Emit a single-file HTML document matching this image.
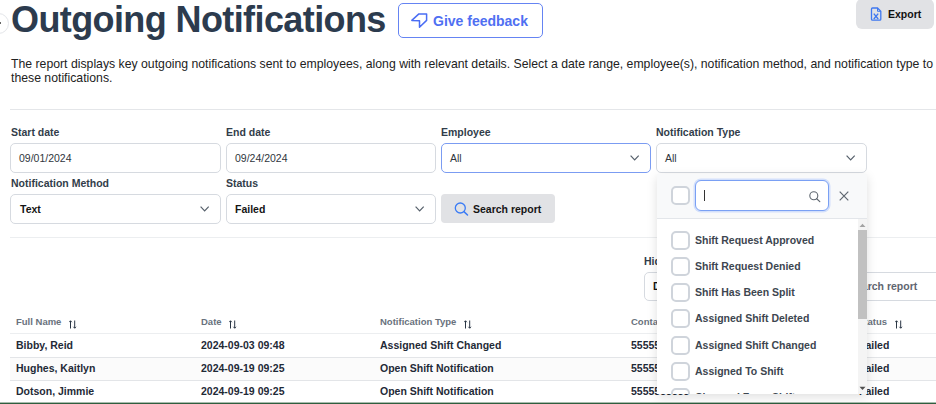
<!DOCTYPE html>
<html><head><meta charset="utf-8">
<style>
*{box-sizing:border-box;margin:0;padding:0}
html,body{width:936px;height:404px;overflow:hidden;background:#fff}
body{position:relative;font-family:"Liberation Sans",sans-serif;color:#222}
.a{position:absolute;white-space:nowrap}
.circ{left:-12.5px;top:12.5px;width:21px;height:21px;border:1px solid #e3e5e9;border-radius:50%}
.dot{left:0;top:22px;width:1px;height:2px;background:#666}
.title{left:11px;top:-2px;font-size:36px;letter-spacing:-0.6px;font-weight:bold;color:#2c3b4e;line-height:44px}
.fb{left:398px;top:3px;width:145px;height:35px;border:1px solid #6584f3;border-radius:5px}
.fbt{left:433px;top:11px;font-size:14px;font-weight:bold;color:#4f6ff2;line-height:20px}
.exp{left:856px;top:-1px;width:78px;height:30px;background:#e1e2e5;border-radius:6px}
.expt{left:888px;top:8px;font-size:10.5px;font-weight:bold;color:#111;line-height:12px}
.desc{left:11px;top:57px;font-size:12.25px;line-height:14px;color:#222}
.hr{height:1px;background:#e4e6e9}
.lbl{font-size:10.5px;font-weight:bold;color:#323d4a;line-height:12px}
.inp{height:30px;border:1px solid #d6dae0;border-radius:5px;background:#fff}
.itx{font-size:10.5px;color:#30363d;line-height:12px}
.ibx{font-size:10.5px;font-weight:bold;color:#151515;line-height:12px}
.btn{background:#e1e2e5;border-radius:4px}
.th{font-size:9.5px;font-weight:bold;color:#69727d;line-height:12px}
.td{font-size:10.5px;font-weight:bold;color:#1f2a37;line-height:12px}
.dd{left:657px;top:174px;width:210px;height:220px;background:#fff;box-shadow:0 3px 10px rgba(0,0,0,.13)}
.ddh{left:0;top:0;width:210px;height:44.5px;background:#f8f9fa;border-bottom:1px solid #e3e6ea}
.cb{width:19px;height:19px;border:2px solid #cfd4db;border-radius:5px;background:#fff}
.li{font-size:10.5px;font-weight:bold;color:#3d4650;line-height:12px}
</style></head><body>
<div class="a circ"></div><div class="a dot"></div>
<div class="a title">Outgoing Notifications</div>
<div class="a fb"></div>
<svg class="a" style="left:409px;top:11px" width="20" height="20" viewBox="409 11 20 20"><path d="M411.8,20.4 L418.9,13.9 L426.6,13.9 L426.6,20.4 L419.5,27.2 L419.5,20.7 Z" fill="none" stroke="#4a6df4" stroke-width="1.5" stroke-linejoin="round"/></svg>
<div class="a fbt">Give feedback</div>
<div class="a exp"></div>
<svg class="a" style="left:870px;top:7px" width="13" height="15" viewBox="870 7 13 15"><path d="M871.5,9 Q871.5,8 872.5,8 L877.5,8 L880.8,11.3 L880.8,19.2 Q880.8,20.2 879.8,20.2 L872.5,20.2 Q871.5,20.2 871.5,19.2 Z" fill="none" stroke="#3f78f0" stroke-width="1.3"/><path d="M877.5,8 L877.5,11.3 L880.8,11.3" fill="none" stroke="#3f78f0" stroke-width="1"/><path d="M873.8,13.6 L878.2,19 M878.2,13.6 L873.8,19" stroke="#3f78f0" stroke-width="1.4"/></svg>
<div class="a expt">Export</div>
<div class="a desc">The report displays key outgoing notifications sent to employees, along with relevant details. Select a date range, employee(s), notification method, and notification type to<br>these notifications.</div>
<div class="a hr" style="left:10px;top:109px;width:926px"></div>

<div class="a lbl" style="left:11px;top:126px">Start date</div>
<div class="a inp" style="left:10px;top:143px;width:211px"></div>
<div class="a itx" style="left:19px;top:152px">09/01/2024</div>
<div class="a lbl" style="left:226px;top:126px">End date</div>
<div class="a inp" style="left:226px;top:143px;width:210px"></div>
<div class="a itx" style="left:235px;top:152px">09/24/2024</div>
<div class="a lbl" style="left:441px;top:126px">Employee</div>
<div class="a inp" style="left:441px;top:143px;width:210px;border-color:#7b9cf2"></div>
<div class="a itx" style="left:450px;top:152px">All</div>
<svg class="a" style="left:630px;top:155.3px" width="10" height="6" viewBox="0 0 10 6"><path d="M0.6,0.6 L4.65,4.9 L8.7,0.6" fill="none" stroke="#56606b" stroke-width="1.2"/></svg>
<div class="a lbl" style="left:656px;top:126px">Notification Type</div>
<div class="a inp" style="left:656px;top:143px;width:211px"></div>
<div class="a itx" style="left:665px;top:152px">All</div>
<svg class="a" style="left:845.8px;top:155.3px" width="10" height="6" viewBox="0 0 10 6"><path d="M0.6,0.6 L4.65,4.9 L8.7,0.6" fill="none" stroke="#56606b" stroke-width="1.2"/></svg>

<div class="a lbl" style="left:11px;top:177px">Notification Method</div>
<div class="a inp" style="left:10px;top:194px;width:211px"></div>
<div class="a ibx" style="left:20px;top:203px">Text</div>
<svg class="a" style="left:199.8px;top:206px" width="10" height="6" viewBox="0 0 10 6"><path d="M0.6,0.6 L4.65,4.9 L8.7,0.6" fill="none" stroke="#56606b" stroke-width="1.2"/></svg>
<div class="a lbl" style="left:226px;top:177px">Status</div>
<div class="a inp" style="left:226px;top:194px;width:210px"></div>
<div class="a ibx" style="left:235px;top:203px">Failed</div>
<svg class="a" style="left:414.8px;top:206px" width="10" height="6" viewBox="0 0 10 6"><path d="M0.6,0.6 L4.65,4.9 L8.7,0.6" fill="none" stroke="#56606b" stroke-width="1.2"/></svg>
<div class="a btn" style="left:441px;top:194px;width:114px;height:29px"></div>
<svg class="a" style="left:453px;top:201px" width="16" height="16" viewBox="453 201 16 16"><circle cx="460.3" cy="208" r="5" fill="none" stroke="#3b7cf5" stroke-width="1.3"/><path d="M464.2,211.9 L467.5,215" stroke="#3b7cf5" stroke-width="1.5" stroke-linecap="round"/></svg>
<div class="a ibx" style="left:473px;top:202.5px">Search report</div>
<div class="a hr" style="left:10px;top:237px;width:926px;background:#eceef0"></div>

<div class="a lbl" style="left:644px;top:255px">Hide columns</div>
<div class="a inp" style="left:644px;top:272px;width:200px;height:28.5px"></div>
<div class="a ibx" style="left:653px;top:280px">Date</div>
<div class="a inp" style="left:770px;top:272px;width:190px;height:28.5px"></div>
<div class="a" style="left:849px;top:280px;font-size:10.5px;font-weight:bold;color:#5f6670;line-height:12px">Search report</div>

<div class="a th" style="left:16px;top:316px">Full Name</div><svg class="a" style="left:69px;top:319.5px" width="8" height="9" viewBox="0 0 8 9"><path d="M1.5,0.8 V8.5 M0.2,2.2 L1.5,0.8 L2.8,2.2" fill="none" stroke="#2a3644" stroke-width="1"/><path d="M5.7,0.5 V8.2 M4.4,6.8 L5.7,8.2 L7,6.8" fill="none" stroke="#2a3644" stroke-width="1"/></svg>
<div class="a th" style="left:201px;top:316px">Date</div><svg class="a" style="left:229px;top:319.5px" width="8" height="9" viewBox="0 0 8 9"><path d="M1.5,0.8 V8.5 M0.2,2.2 L1.5,0.8 L2.8,2.2" fill="none" stroke="#2a3644" stroke-width="1"/><path d="M5.7,0.5 V8.2 M4.4,6.8 L5.7,8.2 L7,6.8" fill="none" stroke="#2a3644" stroke-width="1"/></svg>
<div class="a th" style="left:380px;top:316px">Notification Type</div><svg class="a" style="left:463.5px;top:319.5px" width="8" height="9" viewBox="0 0 8 9"><path d="M1.5,0.8 V8.5 M0.2,2.2 L1.5,0.8 L2.8,2.2" fill="none" stroke="#2a3644" stroke-width="1"/><path d="M5.7,0.5 V8.2 M4.4,6.8 L5.7,8.2 L7,6.8" fill="none" stroke="#2a3644" stroke-width="1"/></svg>
<div class="a th" style="left:631px;top:316px">Contact</div>
<div class="a th" style="left:858px;top:316px">Status</div><svg class="a" style="left:895px;top:319.5px" width="8" height="9" viewBox="0 0 8 9"><path d="M1.5,0.8 V8.5 M0.2,2.2 L1.5,0.8 L2.8,2.2" fill="none" stroke="#2a3644" stroke-width="1"/><path d="M5.7,0.5 V8.2 M4.4,6.8 L5.7,8.2 L7,6.8" fill="none" stroke="#2a3644" stroke-width="1"/></svg>
<div class="a hr" style="left:10px;top:333px;width:926px;background:#eceef0"></div>
<div class="a" style="left:10px;top:357px;width:926px;height:23px;background:#fbfbfb"></div>
<div class="a hr" style="left:10px;top:357px;width:926px;background:#e3e5e8"></div>
<div class="a hr" style="left:10px;top:380px;width:926px;background:#e3e5e8"></div>
<div class="a td" style="left:16px;top:339px">Bibby, Reid</div>
<div class="a td" style="left:201px;top:339px">2024-09-03 09:48</div>
<div class="a td" style="left:380px;top:339px">Assigned Shift Changed</div>
<div class="a td" style="left:631px;top:339px">5555555555</div>
<div class="a td" style="left:859px;top:339px">Failed</div>
<div class="a td" style="left:16px;top:362px">Hughes, Kaitlyn</div>
<div class="a td" style="left:201px;top:362px">2024-09-19 09:25</div>
<div class="a td" style="left:380px;top:362px">Open Shift Notification</div>
<div class="a td" style="left:631px;top:362px">5555555555</div>
<div class="a td" style="left:859px;top:362px">Failed</div>
<div class="a td" style="left:16px;top:385px">Dotson, Jimmie</div>
<div class="a td" style="left:201px;top:385px">2024-09-19 09:25</div>
<div class="a td" style="left:380px;top:385px">Open Shift Notification</div>
<div class="a td" style="left:631px;top:385px">5555555555</div>
<div class="a td" style="left:859px;top:385px">Failed</div>
<div class="a" style="left:0;top:402px;width:936px;height:1px;background:#a9bcae"></div><div class="a" style="left:0;top:403px;width:936px;height:1px;background:#2f5e3f"></div>

<div class="a dd">
  <div class="a ddh"></div>
  <div class="a cb" style="left:13.5px;top:11.8px"></div>
  <div class="a" style="left:37.5px;top:6px;width:134px;height:30.5px;border:1.5px solid #7aa0f4;border-radius:6px;background:#fff;box-shadow:0 0 0 1.5px #d3e0fb"></div>
  <div class="a" style="left:46.5px;top:16px;width:1px;height:10.5px;background:#333"></div>
  <svg class="a" style="left:151.5px;top:16.5px" width="12" height="12" viewBox="0 0 12 12"><circle cx="4.8" cy="4.8" r="4" fill="none" stroke="#5f6770" stroke-width="1.1"/><path d="M7.7,7.7 L10.8,10.6" stroke="#5f6770" stroke-width="1.2" stroke-linecap="round"/></svg>
  <svg class="a" style="left:182px;top:17px" width="10" height="10" viewBox="0 0 10 10"><path d="M0.7,0.7 L9.3,9.3 M9.3,0.7 L0.7,9.3" stroke="#5f6770" stroke-width="1.2"/></svg>
  <div class="a" style="left:0;top:44.5px;width:210px;height:175.5px;overflow:hidden">
  <div class="a cb" style="left:13.5px;top:12.30px"></div>
  <div class="a li" style="left:38px;top:15.30px">Shift Request Approved</div>
  <div class="a cb" style="left:13.5px;top:38.50px"></div>
  <div class="a li" style="left:38px;top:41.50px">Shift Request Denied</div>
  <div class="a cb" style="left:13.5px;top:64.70px"></div>
  <div class="a li" style="left:38px;top:67.70px">Shift Has Been Split</div>
  <div class="a cb" style="left:13.5px;top:90.90px"></div>
  <div class="a li" style="left:38px;top:93.90px">Assigned Shift Deleted</div>
  <div class="a cb" style="left:13.5px;top:117.10px"></div>
  <div class="a li" style="left:38px;top:120.10px">Assigned Shift Changed</div>
  <div class="a cb" style="left:13.5px;top:143.30px"></div>
  <div class="a li" style="left:38px;top:146.30px">Assigned To Shift</div>
  <div class="a cb" style="left:13.5px;top:169.50px"></div>
  <div class="a li" style="left:38px;top:172.50px">Changed From Shift</div>
  <div class="a" style="left:200.5px;top:0;width:9.5px;height:176px;background:#f4f4f4"></div>
  <svg class="a" style="left:202px;top:4px" width="7" height="5" viewBox="0 0 7 5"><path d="M0.5,4 L3.5,0.8 L6.5,4 Z" fill="#a3a3a3"/></svg>
  <svg class="a" style="left:202px;top:167px" width="7" height="5" viewBox="0 0 7 5"><path d="M0.5,0.8 L3.5,4 L6.5,0.8 Z" fill="#505050"/></svg>
  <div class="a" style="left:201px;top:11px;width:8.5px;height:89px;background:#c1c1c1"></div>
  </div>
</div>
</body></html>
